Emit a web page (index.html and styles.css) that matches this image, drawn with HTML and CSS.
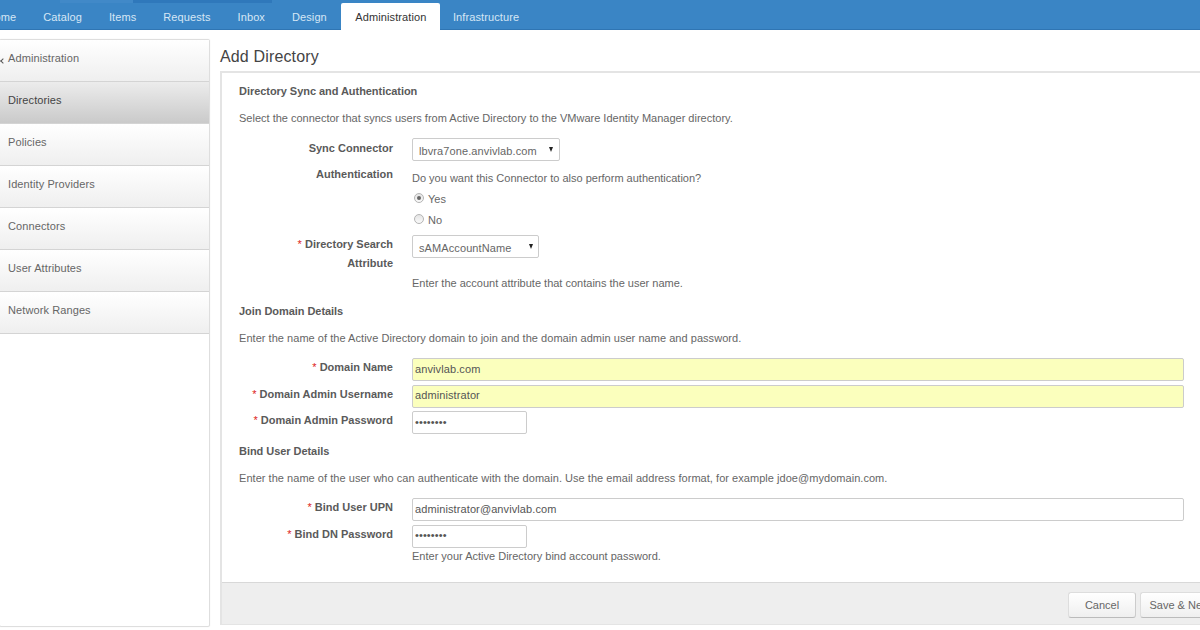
FILE: index.html
```html
<!DOCTYPE html>
<html lang="en">
<head>
<meta charset="utf-8">
<title>Add Directory</title>
<link rel="stylesheet" href="styles.css">
</head>
<body>
<header class="topbar">
  <div class="topbar-strip"></div>
  <nav class="tabs">
    <a class="tab tab-home">Home</a>
    <a class="tab">Catalog</a>
    <a class="tab">Items</a>
    <a class="tab">Requests</a>
    <a class="tab">Inbox</a>
    <a class="tab">Design</a>
    <a class="tab tab-active">Administration</a>
    <a class="tab">Infrastructure</a>
  </nav>
</header>
<div class="layout">
  <aside class="sidebar">
    <a class="side-item"><span class="chevron"></span>Administration</a>
    <a class="side-item side-active">Directories</a>
    <a class="side-item">Policies</a>
    <a class="side-item">Identity Providers</a>
    <a class="side-item">Connectors</a>
    <a class="side-item">User Attributes</a>
    <a class="side-item">Network Ranges</a>
  </aside>
  <main class="main">
    <h1 class="title">Add Directory</h1>
    <div class="panel">
      <form class="form">
        <h2 class="section">Directory Sync and Authentication</h2>
        <p class="intro">Select the connector that syncs users from Active Directory to the VMware Identity Manager directory.</p>
        <div class="row row-sync">
          <label class="label">Sync Connector</label>
          <div class="select select-sync"><span>lbvra7one.anvivlab.com</span></div>
        </div>
        <div class="row row-auth">
          <label class="label">Authentication</label>
          <div class="control">
            <div class="help help-auth">Do you want this Connector to also perform authentication?</div>
            <div class="radio-row"><span class="radio radio-on"></span>Yes</div>
            <div class="radio-row"><span class="radio"></span>No</div>
          </div>
        </div>
        <div class="row row-search">
          <label class="label label-two"><i>*</i> Directory Search Attribute</label>
          <div class="control">
            <div class="select select-attr"><span>sAMAccountName</span></div>
            <div class="help help-attr">Enter the account attribute that contains the user name.</div>
          </div>
        </div>
        <h2 class="section section-join">Join Domain Details</h2>
        <p class="intro intro-wide">Enter the name of the Active Directory domain to join and the domain admin user name and password.</p>
        <div class="row row-first">
          <label class="label"><i>*</i> Domain Name</label>
          <input class="input input-fill" value="anvivlab.com">
        </div>
        <div class="row row-next">
          <label class="label"><i>*</i> Domain Admin Username</label>
          <input class="input input-fill" value="administrator">
        </div>
        <div class="row row-next">
          <label class="label"><i>*</i> Domain Admin Password</label>
          <input class="input input-short" type="password" value="password">
        </div>
        <h2 class="section section-bind">Bind User Details</h2>
        <p class="intro intro-wide">Enter the name of the user who can authenticate with the domain. Use the email address format, for example jdoe@mydomain.com.</p>
        <div class="row row-first">
          <label class="label"><i>*</i> Bind User UPN</label>
          <input class="input" value="administrator@anvivlab.com">
        </div>
        <div class="row row-next">
          <label class="label"><i>*</i> Bind DN Password</label>
          <div class="control">
            <input class="input input-short" type="password" value="password">
            <div class="help help-bind">Enter your Active Directory bind account password.</div>
          </div>
        </div>
      </form>
      <footer class="actions">
        <button class="btn btn-cancel" type="button">Cancel</button>
        <button class="btn btn-save" type="button">Save &amp; Next</button>
      </footer>
    </div>
  </main>
</div>
</body>
</html>
```
FILE: styles.css
```css
* { box-sizing: border-box; }
html, body { margin: 0; height: 630px; overflow: hidden; background: #fff; }
body { width: 1200px; font: 11px/18px "Liberation Sans", Arial, sans-serif; color: #666; }

.topbar { height: 30px; background: #3a85c5; border-bottom: 1px solid #2f75b3; position: relative; }
.topbar-strip { position: absolute; left: 60px; top: 0; width: 212px; height: 3px; background: linear-gradient(90deg, #4189c8 0 73px, #2f78bb 73px); }
.tabs { display: flex; align-items: flex-end; height: 29px; margin-left: -27px; position: relative; letter-spacing: .1px; }
.tab { display: block; height: 26px; line-height: 28px; padding: 0 13.5px; color: #d6e7f5; }
.tab-active { margin: 0 -1px -1px 1px; height: 27px; padding: 0 14px; background: #fff; color: #333; border-radius: 2px 2px 0 0; }

.layout { display: flex; align-items: flex-start; }

.sidebar { flex: none; width: 211px; height: 588px; margin: 9px 0 0 -1px; border: 1px solid #dedede; border-radius: 2px; box-shadow: 0 0 1px #ddd; letter-spacing: .1px; }
.side-item { display: block; height: 42px; padding: 0 0 0 8px; line-height: 37px; border-bottom: 1px solid #d4d4d4; background: linear-gradient(#fff, #efefef); color: #666; position: relative; }
.side-active { background: linear-gradient(#ececec, #cacaca); color: #444; }
.chevron { position: absolute; left: 1px; top: 19px; width: 4px; height: 4px; border-left: 1px solid #555; border-bottom: 1px solid #555; transform: rotate(45deg); }

.main { margin-left: 10px; flex: 1; min-width: 0; }
.title { margin: 0; height: 41px; padding-top: 17px; font: normal 16px/20px "Liberation Sans", Arial, sans-serif; letter-spacing: .15px; color: #444; }
.panel { height: 554px; border: solid #e4e4e4; border-width: 2px 0 1px 2px; display: flex; flex-direction: column; }
.form { flex: 1; padding: 8px 16px 0 17px; }

.section { margin: 0; font: bold 11px/20px "Liberation Sans", Arial, sans-serif; letter-spacing: -.05px; color: #5a5a5a; }
.section-join { margin-top: 8px; }
.section-bind { margin-top: 7px; }
.intro { margin: 7px 0 0; line-height: 20px; }
.intro-wide { letter-spacing: .04px; }

.row { display: grid; grid-template-columns: 154px 1fr; column-gap: 19px; align-items: start; }
.row-sync { margin-top: 10px; }
.row-auth { margin-top: 4px; }
.row-search { margin-top: 4px; }
.row-first { margin-top: 10px; }
.row-next { margin-top: 3.5px; }

.label { display: block; text-align: right; font-weight: bold; line-height: 19px; color: #5a5a5a; }
.row-sync .label { padding-top: 1px; }
.label-two { padding-left: 40px; }
.label i { font-style: normal; font-weight: normal; color: #d22; }

.select { position: relative; height: 23px; background: #fff; border: 1px solid #ccc; border-radius: 2px; line-height: 24px; padding-left: 6px; color: #666; letter-spacing: .1px; }
.select::after { content: ""; position: absolute; top: 8px; border-left: 2.5px solid transparent; border-right: 2.5px solid transparent; border-top: 5px solid #222; }
.select-sync { width: 148px; }
.select-sync::after { right: 6px; }
.select-attr { width: 127px; }
.select-attr::after { right: 5px; }

.help { line-height: 20px; }
.help-auth { height: 23px; line-height: 18px; padding-top: 4px; }
.help-attr { margin-top: 15px; }
.help-bind { line-height: 16px; }

.radio-row { display: flex; align-items: center; height: 21.5px; padding-left: 2px; color: #666; }
.radio { width: 10px; height: 10px; margin-right: 4px; border-radius: 50%; border: 1px solid #b4b4b4; background: linear-gradient(#e4e4e4, #fafafa); position: relative; top: -1px; }
.radio-on::after { content: ""; position: absolute; left: 2px; top: 2px; width: 4px; height: 4px; border-radius: 50%; background: #666; }

.input { display: block; width: 100%; height: 23px; padding: 0 2px 2px; font: 11px "Liberation Sans", Arial, sans-serif; letter-spacing: .1px; color: #555; background: #fff; border: 1px solid #ccc; border-radius: 2px; outline: 0; }
.input-fill { background: #fbffbd; }
.input-short { width: 115px; }

.actions { height: 42px; flex: none; background: #eee; border-top: 1px solid #d8d8d8; display: flex; align-items: flex-start; padding: 9px 0 0 846px; gap: 4px; }
.btn { flex: none; height: 26px; padding: 0; font: 11px "Liberation Sans", Arial, sans-serif; color: #666; background: linear-gradient(#fff, #efefef); border: 1px solid #ddd; border-bottom-color: #bbb; border-right-color: #ccc; border-radius: 3px; }
.btn-cancel { width: 68px; }
.btn-save { width: 80px; }
```
